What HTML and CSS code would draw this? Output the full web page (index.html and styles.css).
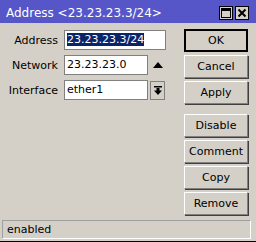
FILE: index.html
```html
<!DOCTYPE html>
<html>
<head>
<meta charset="utf-8">
<link rel="stylesheet" href="styles.css">
</head>
<body>
<div class="win">
  <div class="titlebar">
    <span class="title">Address &lt;23.23.23.3/24&gt;</span>
    <div class="tbtns">
      <span class="tbtn"><svg width="10" height="10" viewBox="0 0 10 10"><rect x="0.5" y="0.5" width="9" height="9" fill="none" stroke="#000"/><rect x="1" y="1" width="8" height="2" fill="#000"/></svg></span>
      <span class="tbtn"><svg width="10" height="10" viewBox="0 0 10 10"><path d="M1.5 1.5 L8.5 8.5 M8.5 1.5 L1.5 8.5" stroke="#000" stroke-width="2"/></svg></span>
    </div>
  </div>
  <div class="content">
    <div class="form">
      <div class="row">
        <span class="label">Address</span>
        <div class="field wide"><span class="sel">23.23.23.3/24</span></div>
      </div>
      <div class="row">
        <span class="label">Network</span>
        <div class="field">23.23.23.0</div>
        <span class="arrow"><svg width="10" height="6" viewBox="0 0 10 6"><path d="M0 6 L5 0 L10 6 Z" fill="#000"/></svg></span>
      </div>
      <div class="row">
        <span class="label">Interface</span>
        <div class="field">ether1</div>
        <span class="drop"><svg width="8" height="9" viewBox="0 0 8 9"><rect x="0" y="0" width="8" height="1.5" fill="#000"/><rect x="2.5" y="2" width="3" height="3" fill="#000"/><path d="M0 4.5 L8 4.5 L4 9 Z" fill="#000"/></svg></span>
      </div>
    </div>
    <div class="buttons">
      <div class="btn default">OK</div>
      <div class="btn">Cancel</div>
      <div class="btn">Apply</div>
      <div class="btn gap">Disable</div>
      <div class="btn">Comment</div>
      <div class="btn">Copy</div>
      <div class="btn">Remove</div>
    </div>
  </div>
  <div class="status">enabled</div>
</div>
</body>
</html>
```
FILE: styles.css
```css
html, body {
  margin: 0;
  padding: 0;
  background: #d4d0c8;
}
body {
  width: 256px;
  height: 242px;
  overflow: hidden;
  font-family: "DejaVu Sans", Verdana, sans-serif;
  font-size: 11px;
  color: #000;
}
.win {
  width: 256px;
  height: 241px;
  display: flex;
  flex-direction: column;
  border-bottom: 1px solid #000;
  background: #d4d0c8;
}
.titlebar {
  height: 23px;
  background: #5656c8;
  display: flex;
  align-items: center;
  justify-content: space-between;
  padding: 0 7px 0 6px;
  box-sizing: border-box;
}
.title {
  color: #fff;
  font-size: 12px;
  padding-top: 2px;
}
.tbtns {
  display: flex;
  gap: 2px;
  padding-top: 3px;
}
.tbtn {
  width: 14px;
  height: 14px;
  background: #d4d0c8;
  border: 1px solid #000;
  box-sizing: border-box;
  display: flex;
  align-items: center;
  justify-content: center;
}
.content {
  flex: 1;
  display: flex;
  justify-content: space-between;
  padding: 6px 8px 0 6px;
}
.form {
  display: flex;
  flex-direction: column;
  gap: 5px;
  padding-top: 1px;
}
.row {
  display: flex;
  align-items: center;
  height: 20px;
}
.label {
  width: 52px;
  text-align: right;
  margin-right: 6px;
}
.field {
  width: 84px;
  height: 20px;
  box-sizing: border-box;
  background: #fff;
  border: 1px solid #808080;
  padding: 2px 2px;
  line-height: 14px;
  white-space: nowrap;
}
.field.wide {
  width: 102px;
}
.sel {
  background: #0a246a;
  color: #fff;
}
.arrow {
  margin-left: 5px;
  display: flex;
}
.drop {
  margin-left: 2px;
  width: 15px;
  height: 19px;
  box-sizing: border-box;
  border: 1px solid #808080;
  display: flex;
  align-items: center;
  justify-content: center;
}
.buttons {
  display: flex;
  flex-direction: column;
  gap: 3px;
}
.btn {
  width: 64px;
  height: 23px;
  box-sizing: border-box;
  border: 1px solid #808080;
  border-top-color: #fff;
  border-left-color: #fff;
  box-shadow: 1px 1px 0 #404040;
  display: flex;
  align-items: center;
  justify-content: center;
  font-size: 11px;
}
.btn.default {
  border: 2px solid #000;
  box-shadow: none;
}
.btn.gap {
  margin-top: 7px;
}
.status {
  margin: 0 5px 2px 2px;
  height: 19px;
  border: 1px solid #a0a0a0;
  border-bottom-color: #fff;
  border-right-color: #fff;
  box-sizing: border-box;
  padding: 0 4px;
  line-height: 18px;
}
```
